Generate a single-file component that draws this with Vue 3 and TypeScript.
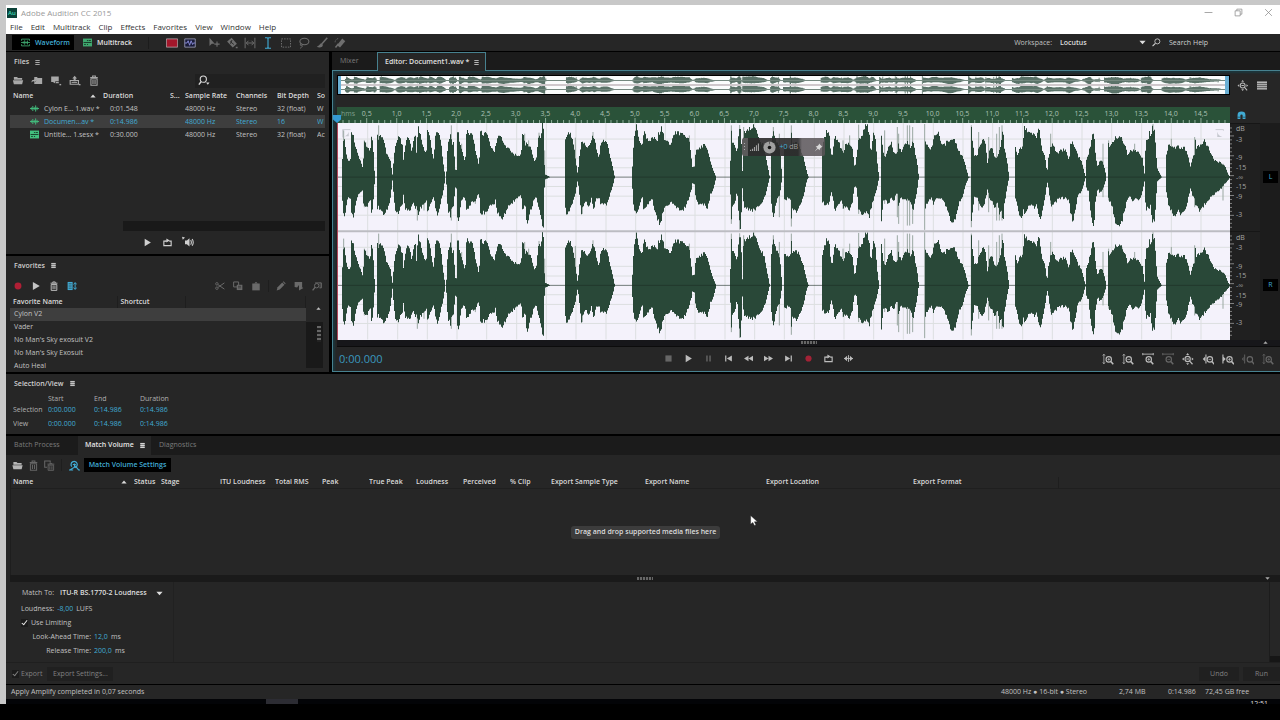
<script setup lang="ts">
import { h, ref } from 'vue'

/* ---------- icons ---------- */
const S = 'fill="none" stroke="currentColor"'
const mag = `<circle cx="9" cy="8.500" r="3.600" ${S} stroke-width="1.500"/><path d="M11.800 11.300l3.200 3.700" ${S} stroke-width="2"/>`
const plus = `<path d="M7.200 8.500h3.600M9 6.700v3.600" ${S} stroke-width="1"/>`
const minus = `<path d="M7.200 8.500h3.600" ${S} stroke-width="1"/>`
const vbar = `<path d="M2.500 2v12M1 3.500l1.500-2 1.500 2M1 12.500l1.500 2 1.500-2" ${S} stroke-width="1"/>`
const icons: Record<string, string> = {
  menu: `<path d="M3 3.500h10M3 8h10M3 12.500h10" ${S} stroke-width="1.800"/>`,
  grip: `<path d="M3 2h10v12H3z" fill="currentColor" opacity=".5"/><path d="M3 3.500h10M3 8h10M3 12.500h10" ${S} stroke-width="2"/>`,
  wave: `<path d="M0 8h16M2.500 6v4M5 3.500v9M7.500 5.500v5M10 2.500v11M12.500 5v6" ${S} stroke-width="1.600"/>`,
  waveBox: `<path d="M1 2h14M1 14h14M1 2v3M15 2v3M1 11v3M15 11v3M0 8h16M4 6v4M6.500 4v8M9 6v4M11.500 4.500v7" ${S} stroke-width="1.500"/>`,
  multi: `<path d="M0 1h16v14H0z" fill="currentColor"/><path d="M1 8h14M7 4.500h2M10 4.500h4M2 11.500h3M7 11.500h2" stroke="#10241a" stroke-width="1.400"/>`,
  spectral: `<path d="M.5 2.500h15v11H.5z" fill="#a3172b" stroke="#b9aeb2" stroke-width="1"/>`,
  pitch: `<path d="M1 2.500h14v11H1z" fill="#191b38" stroke="#a9abc9"/><path d="M1 8h3l1.500-3 2 6 2-6 2 5 1-2H15" ${S} stroke-width="1.200"/>`,
  move: `<path d="M2 1v11l3-3h4z" fill="currentColor"/><path d="M12 6v7M8.500 9.500h7" ${S} stroke-width="1.500"/>`,
  razor: `<path d="M1.500 6l6-5 7 8-5.500 5z" fill="currentColor"/><path d="M5.500 6l5 4M8 4l-2 5" stroke="#262626" stroke-width="1.200"/><path d="M13 13h2.500v2H13z" fill="currentColor"/>`,
  slip: `<path d="M1.500 1v14M14.500 1v14M3.500 8h9M6 5L3 8l3 3M10 5l3 3-3 3" ${S} stroke-width="1.300"/>`,
  ibeam: `<path d="M4 1h3l1 1 1-1h3M4 15h3l1-1 1 1h3M8 2v12" ${S} stroke-width="1.500"/>`,
  marquee: `<path d="M2 2.500h12v11H2z" ${S} stroke-width="1.300" stroke-dasharray="2 1.500"/>`,
  lasso: `<ellipse cx="8.500" cy="6" rx="6" ry="4.300" ${S} stroke-width="1.400"/><path d="M4 9c-2 1-1 3 1 2.500S5 14 3 15" ${S} stroke-width="1.300"/>`,
  brush: `<path d="M15 1L8 9" ${S} stroke-width="2"/><path d="M8 8.500c-3-.5-3 3.500-7 4.500 3 2 9 1 8-3z" fill="currentColor"/>`,
  heal: `<path d="M4 11l7-9 4 3.500L8 14z" fill="currentColor"/><path d="M2 14l4-5" ${S} stroke-width="2"/><path d="M1.500 7a5 5 0 015-5" ${S} stroke-width="1.200" stroke-dasharray="1.500 1"/>`,
  folder: `<path d="M2 3h4.500L8 4.500h6V7H2z" fill="currentColor"/><path d="M.5 7.500h15L14 13.500H2z" fill="currentColor"/>`,
  importF: `<path d="M4 3h4l1 1.500h6.500V13H4v-2L7 8.500 4 6z" fill="currentColor"/><path d="M0 11c0-3 1-4 4-4V5l3 3-3 3V9c-2 0-3 .5-4 2z" fill="currentColor"/>`,
  newFile: `<path d="M1 2h11v7H7v3.500L3.500 10H1z" fill="currentColor"/><path d="M8 10h4v2H8z" fill="currentColor"/><path d="M13 13h2.500v2H13z" fill="currentColor"/>`,
  insert: `<path d="M1 8h12v5.500H1z" ${S} stroke-width="1.700"/><path d="M3 10.700h8" ${S} stroke-width="1.500"/><path d="M6 9V5H4l3.500-4L11 5H9v4z" fill="currentColor"/><path d="M13.500 13H16v2h-2.500z" fill="currentColor"/>`,
  trash: `<path d="M2.500 3.500h11M6 3V1.500h4V3" ${S} stroke-width="1.500"/><path d="M3.500 5.500h9V15h-9z" ${S} stroke-width="1.500"/><path d="M6.500 7v6M9.500 7v6" ${S} stroke-width="1.500"/>`,
  search: `<circle cx="9.500" cy="6" r="4.500" ${S} stroke-width="1.500"/><path d="M6 9.500L1 14.500" ${S} stroke-width="2"/>`,
  searchDrop: `<circle cx="7" cy="6" r="4.500" ${S} stroke-width="1.600"/><path d="M4 9.500L.5 14" ${S} stroke-width="2"/><path d="M11 11h5l-2.500 3z" fill="currentColor"/>`,
  play: `<path d="M3 1.500l11 6.500L3 14.500z" fill="currentColor"/>`,
  stop: `<path d="M2.500 2.500h11v11h-11z" fill="currentColor"/>`,
  pause: `<path d="M4 2.500h2.500v11H4zM9.500 2.500H12v11H9.500z" fill="currentColor"/>`,
  prev: `<path d="M2 2.500h2.200v11H2zM14 2.500v11L5 8z" fill="currentColor"/>`,
  next: `<path d="M11.800 2.500H14v11h-2.200zM2 2.500v11L11 8z" fill="currentColor"/>`,
  rew: `<path d="M8 3v10L0 8zM16 3v10L8 8z" fill="currentColor"/>`,
  ffwd: `<path d="M0 3v10l8-5zM8 3v10l8-5z" fill="currentColor"/>`,
  rec: `<circle cx="8" cy="8" r="5.500" fill="currentColor"/>`,
  loop: `<path d="M5 5.500H1.500v8h13v-8H11" ${S} stroke-width="2"/><path d="M6 1l6 3.500L6 8z" fill="currentColor"/><path d="M4 5.500h3" ${S} stroke-width="2"/>`,
  skip: `<path d="M5.500 3L0 8l5.500 5zM10.500 3L16 8l-5.500 5z" fill="currentColor"/><path d="M0 8h16M8 2v12" ${S} stroke-width="1.600"/>`,
  speaker: `<path d="M4 6h2.500L10 3v11L6.500 11H4z" fill="currentColor"/><path d="M11.500 5.500q2 3 0 6M13.500 4q3 4.500 0 9" ${S} stroke-width="1.400"/><path d="M0 1l4 1-3 3z" fill="currentColor"/>`,
  macro: `<path d="M1 1.500h8v13H1z" fill="currentColor"/><path d="M2.500 4.500h5M2.500 8h5M2.500 11.500h5" stroke="#262626"/><path d="M13 3v10M10.500 5.500L13 2.500l2.500 3M10.500 10.500l2.500 3 2.500-3" ${S} stroke-width="1.500"/>`,
  cut: `<path d="M15 3L5 10M15 13L5 6" ${S} stroke-width="1.600"/><circle cx="3" cy="4.500" r="2" ${S} stroke-width="1.400"/><circle cx="3" cy="11.500" r="2" ${S} stroke-width="1.400"/>`,
  copy: `<path d="M1 1.500h8v8H1z" ${S} stroke-width="1.600"/><path d="M6 6h9v8.500H6z" fill="currentColor"/><path d="M8 8.500h5M8 11h5" stroke="#262626"/>`,
  copyTrash: `<path d="M9 4V1.500H1v9h3.500" ${S} stroke-width="1.500"/><path d="M5 6h10M8 5h4M6 7.500h8V15H6zM8.500 9v5M11.500 9v5" ${S} stroke-width="1.300"/>`,
  paste: `<path d="M2 4h12v11H2z" fill="currentColor"/><path d="M5 4l3-3 3 3z" fill="currentColor"/>`,
  pencil: `<path d="M1 15l1.500-5L10 2.500 13.500 6 6 13.500z" fill="currentColor"/><path d="M11 1.500l1-1 3.500 3.500-1 1z" fill="currentColor"/>`,
  runFav: `<path d="M1 1.500h12v8H8v-3l-3 4-4-1z" fill="currentColor"/><path d="M8 7l7 4-7 4z" fill="currentColor"/>`,
  find: `<path d="M5 3h10v8h-3" ${S} stroke-width="1.500"/><circle cx="7.500" cy="7.500" r="3.500" ${S} stroke-width="1.600"/><path d="M5 10l-4 5" ${S} stroke-width="2"/><path d="M13 2v9" ${S}/>`,
  scan: `<path d="M4 9.500A4.500 4.500 0 118.500 11" ${S} stroke-width="1.800"/><path d="M8 5v5.500L1 14.500h5M9 8.500l5 6h2M5.500 6.500H10" ${S} stroke-width="1.700"/>`,
  zInV: vbar + mag + plus,
  zOutV: vbar + mag + minus,
  zInH: `<path d="M1 1.500h14M1 0v3M15 0v3" ${S} stroke-width="1.200"/>` + mag + plus,
  zOutH: `<path d="M1 1.500h14M1 0v3M15 0v3" ${S} stroke-width="1.200"/>` + mag + minus,
  zFull: `<circle cx="7.500" cy="8" r="3.500" ${S} stroke-width="1.500"/><path d="M10 10.500l4 4.500M5.700 8h3.600" ${S} stroke-width="1.600"/><path d="M7.500 0l2 2.500h-4zM7.500 16l2-2.500h-4zM0 8l2.500-2v4zM15.500 8L13 6v4z" fill="currentColor"/>`,
  zLeft: `<path d="M1 8l3-3v6zM4.500 2H6v12H4.500z" fill="currentColor"/>` + `<g transform="translate(1.500 0)">${mag}${minus}</g>`,
  zRight: `<path d="M5 8L2 5v6zM.5 2H2v12H.5z" fill="currentColor"/>` + `<g transform="translate(1 0)">${mag}${plus}</g>`,
  zSel: `<path d="M0 8l2-3v6zM3 2h1.200v12H3z" fill="currentColor"/>` + `<g transform="translate(1.500 0)">${mag}</g>`,
  list: `<path d="M0 1.500h16v13H0z" fill="currentColor"/><path d="M0 5h16M0 8.200h16M0 11.400h16" stroke="#262626" stroke-width="1"/>`,
  magnet: `<path d="M1 14V7a7 6 0 0114 0v7h-5V8a2 2 0 00-4 0v6z" fill="currentColor"/><path d="M1 11h5M10 11h5" stroke="#1d3a44" stroke-width="1.200"/>`,
  bars: `<path d="M0 14V12h2v2zM3.500 14v-4h2v4zM7 14V7h2v7zM10.500 14V4h2v10zM14 14V1h2v13z" fill="currentColor"/>`,
  knob: `<circle cx="8" cy="8" r="7.500" fill="currentColor"/><circle cx="8" cy="8" r="2.200" fill="#151515"/><path d="M8 0v4" stroke="#555"/>`,
  pin: `<path d="M9 1l6 6-2 .5-2.500 2.500-.5 3-3-3L1 15l5-6-3-3 3-.5L8.500 3z" fill="currentColor"/>`,
  up: `<path d="M8 4l7 8H1z" fill="currentColor"/>`,
  down: `<path d="M8 12l7-8H1z" fill="currentColor"/>`,
  min: `<path d="M1 8h14" ${S} stroke-width="1.300"/>`,
  max: `<path d="M2 5h9v9H2zM5 5V2h9v9h-3" ${S} stroke-width="1.300"/>`,
  close: `<path d="M2 2l12 12M14 2L2 14" ${S} stroke-width="1.300"/>`,
  fadeIn: `<path d="M1 15V1h14" ${S} stroke-width="1.500"/><path d="M4 13q6-1 8-8v8z" fill="currentColor"/>`,
  fadeOut: `<path d="M1 1h14v2" ${S} stroke-width="1.500"/><path d="M4 5v9h9q-7-1-9-9z" fill="currentColor"/>`,
  cursor: `<path d="M1 0v14l3.500-3 2.500 5 2.500-1-2.500-5H12z" fill="#fff" stroke="#111" stroke-width=".6"/>`,
}
const Icon = (p: { name: string }) =>
  h('svg', { viewBox: '0 0 16 16', class: 'icon', 'aria-hidden': 'true', innerHTML: icons[p.name] })
Icon.props = ['name']

/* ---------- content ---------- */
const menus = ['File', 'Edit', 'Multitrack', 'Clip', 'Effects', 'Favorites', 'View', 'Window', 'Help']
const tools = [
  ['move', 'Move'], ['razor', 'Razor'], ['slip', 'Slip'], ['ibeam', 'Time Selection'],
  ['marquee', 'Marquee'], ['lasso', 'Lasso'], ['brush', 'Paintbrush'], ['heal', 'Spot Healing'],
]
const files = [
  { icon: 'wave', name: 'Cylon E... 1.wav *', dur: '0:01.548', bits: '32 (float)', src: 'W' },
  { icon: 'wave', name: 'Documen...av *', dur: '0:14.986', bits: '16', src: 'W', sel: true },
  { icon: 'multi', name: 'Untitle... 1.sesx *', dur: '0:30.000', bits: '32 (float)', src: 'Ac' },
]
const favorites = ['Cylon V2', 'Vader', "No Man's Sky exosuit V2", "No Man's Sky Exosuit", 'Auto Heal']
const selection = [
  { label: 'Selection', values: ['0:00.000', '0:14.986', '0:14.986'] },
  { label: 'View', values: ['0:00.000', '0:14.986', '0:14.986'] },
]
const transport = [
  ['stop', 'Stop', 'dim'], ['play', 'Play', ''], ['pause', 'Pause', 'dim'], ['prev', 'Previous', ''], ['rew', 'Rewind', ''],
  ['ffwd', 'Fast Forward', ''], ['next', 'Next', ''], ['rec', 'Record', 'red'], ['loop', 'Loop', ''], ['skip', 'Skip Selection', ''],
]
const zooms = [
  ['zInV', ''], ['zOutV', ''], ['zInH', ''], ['zOutH', 'dim'], ['zFull', ''],
  ['zLeft', ''], ['zRight', ''], ['zSel', 'dim'], ['zInV', 'dim'],
]
const matchCols = [
  ['Name', 'c-name'], ['Status', 'c-status'], ['Stage', 'c-stage'], ['ITU Loudness', 'c-itu'], ['Total RMS', 'c-num'],
  ['Peak', 'c-num'], ['True Peak', 'c-num'], ['Loudness', 'c-num'], ['Perceived', 'c-num'], ['% Clip', 'c-clip'],
  ['Export Sample Type', 'c-type'], ['Export Name', 'c-ename'], ['Export Location', 'c-loc'], ['Export Format', 'c-fmt'], ['', ''],
]
const workspace = ref('Locutus')
const matchTo = ref('ITU-R BS.1770-2 Loudness')
const limiting = ref(true)
const exportOn = ref(true)

/* ---------- waveform ---------- */
const W = 2676
const CH = 324
const MID = 162
/* peaks: x, level above zero, level below zero */
type Peak = [number, number, number]
const sections: { origin: number; peaks: Peak[] }[] = [
  { origin: -24, peaks: [
    [24, 0, 0], [34, 0, 0], [36, 57, 73], [40, 127, 118], [44, 97, 123], [48, 72, 83], [54, 47, 58], [60, 52, 68], [62, 132, 108], [68, 127, 123],
    [76, 92, 83], [84, 67, 53], [96, 32, 43], [98, 37, 83], [102, 112, 88], [108, 97, 93], [118, 77, 73], [122, 90, 73], [124, 155, 148], [126, 117, 93],
    [130, 57, 63], [133, 0, 0], [138, 0, 0], [139, 152, 143], [142, 107, 83], [148, 135, 103], [160, 107, 111], [170, 67, 103], [180, 47, 63], [187, 2, 1],
    [190, 62, 63], [196, 97, 103], [202, 117, 113], [208, 117, 98], [216, 97, 83], [219, 52, 53], [224, 97, 93], [234, 122, 103], [244, 77, 93], [248, 107, 73],
    [256, 127, 98], [259, 50, 80], [262, 157, 113], [268, 137, 98], [278, 87, 83], [288, 77, 73], [291, 147, 103], [298, 127, 88], [308, 57, 63], [310, 52, 53],
    [314, 122, 93], [322, 147, 118], [330, 117, 83], [340, 27, 33], [345, 0, 0], [348, 17, 23], [352, 97, 103], [357, 110, 100], [358, 132, 153], [361, 132, 100], [364, 97, 93],
    [370, 107, 83], [374, 22, 33], [379, 22, 33], [380, 107, 83], [382, 157, 153], [386, 117, 123], [392, 87, 73], [404, 42, 58], [408, 137, 103], [416, 132, 93],
    [426, 127, 73], [436, 77, 73], [446, 32, 43], [450, 137, 113], [460, 132, 108], [470, 127, 103], [480, 97, 83], [492, 77, 78], [494, 87, 63], [500, 112, 103],
    [506, 127, 113], [518, 107, 123], [530, 87, 93], [545, 77, 78], [560, 62, 63], [572, 72, 53], [577, 137, 103], [584, 97, 83], [590, 102, 143], [600, 92, 103],
    [612, 47, 63], [618, 57, 63], [624, 117, 93], [632, 122, 118], [636, 157, 158], [639, 147, 153], [642, 37, 33], [645, 8, 6], [655, 2, 2], [658, 0, 0],
    [702, 0, 0], [703, 107, 83], [708, 127, 113], [714, 135, 103], [724, 122, 88], [734, 67, 53], [742, 7, 8], [746, 52, 43], [752, 107, 110], [760, 107, 83],
    [768, 87, 73], [776, 97, 93], [784, 117, 63], [790, 122, 103], [796, 97, 68], [806, 57, 63], [810, 102, 78], [820, 112, 78], [830, 107, 83], [838, 67, 53],
    [848, 27, 23], [853, 0, 0], [905, 0, 0], [907, 67, 73], [912, 127, 103], [918, 152, 113], [926, 117, 93], [935, 87, 53], [940, 137, 103], [950, 112, 83],
  ] },
  { origin: 906, peaks: [
    [0, 97, 63], [5, 67, 53], [8, 147, 103], [16, 117, 98], [26, 107, 73], [36, 122, 68], [42, 117, 103], [50, 107, 123], [54, 132, 133], [58, 132, 148],
    [64, 157, 128], [68, 127, 103], [76, 107, 83], [80, 117, 93], [90, 97, 73], [98, 132, 83], [110, 135, 93], [125, 132, 101], [135, 117, 93], [145, 122, 63],
    [152, 67, 43], [156, 32, 18], [162, 32, 23], [166, 77, 63], [174, 87, 83], [184, 92, 83], [192, 99, 83], [202, 77, 93], [210, 47, 53], [220, 17, 33],
    [227, 0, 0], [267, 0, 0], [268, 37, 33], [271, 60, 60], [272, 157, 148], [276, 107, 93], [284, 87, 73], [290, 77, 43], [294, 127, 103], [299, 157, 158],
    [302, 127, 133], [306, 17, 33], [308, 107, 73], [312, 132, 88], [320, 142, 93], [330, 147, 98], [340, 157, 101], [350, 137, 93], [360, 107, 83], [372, 87, 63],
    [380, 42, 33], [388, 0, 0], [392, 0, 0], [393, 97, 83], [398, 137, 128], [404, 127, 93], [412, 97, 63], [418, 87, 53], [425, 0, 0], [430, 0, 0],
    [432, 97, 68], [444, 87, 63], [452, 90, 70], [453, 137, 133], [456, 97, 93], [468, 107, 103], [480, 87, 83], [490, 57, 53], [500, 12, 8], [505, 0, 0],
    [544, 0, 0], [546, 87, 73], [552, 122, 83], [558, 135, 83], [566, 127, 78], [574, 57, 43], [580, 97, 83], [584, 127, 103], [592, 112, 83], [602, 87, 73],
    [610, 77, 93], [618, 107, 88], [628, 97, 103], [636, 87, 73], [643, 27, 23], [648, 57, 33], [655, 117, 103], [664, 122, 113], [672, 152, 103], [680, 157, 108],
    [686, 137, 123], [692, 67, 93], [698, 137, 73], [704, 127, 53], [710, 47, 33], [716, 0, 0], [720, 0, 0], [722, 137, 143], [728, 77, 73], [736, 57, 73],
    [744, 97, 83], [752, 107, 63], [760, 77, 73], [770, 67, 43], [774, 97, 83], [782, 77, 63], [792, 97, 63], [800, 107, 68], [810, 87, 73], [818, 117, 103],
    [824, 67, 68], [830, 47, 43], [835, 0, 0], [852, 0, 0], [854, 107, 100], [856, 107, 83], [864, 87, 73], [872, 87, 63], [880, 117, 83], [888, 132, 63],
    [894, 132, 68], [904, 97, 63], [912, 97, 78], [920, 107, 93],
  ] },
  { origin: 1836, peaks: [
    [0, 112, 133], [8, 115, 143], [16, 107, 123], [26, 77, 78], [36, 62, 58], [46, 32, 23], [54, 2, 3], [60, 0, 0], [62, 157, 133], [66, 107, 113],
    [72, 67, 63], [80, 67, 58], [88, 97, 83], [96, 112, 93], [104, 107, 73], [112, 32, 33], [116, 82, 63], [126, 87, 73], [134, 57, 93], [140, 57, 73],
    [148, 87, 113], [152, 100, 103], [158, 152, 133], [162, 87, 83], [170, 47, 33], [176, 0, 0], [194, 0, 0], [195, 87, 63], [200, 67, 83], [210, 87, 123],
    [217, 92, 120], [220, 132, 93], [222, 147, 113], [232, 135, 93], [242, 135, 83], [252, 127, 93], [258, 117, 83], [265, 152, 113], [272, 107, 123], [275, 77, 103],
    [284, 62, 63], [290, 12, 13], [294, 57, 33], [302, 97, 88], [310, 97, 83], [318, 72, 73], [326, 77, 63], [336, 82, 63], [346, 82, 63], [356, 47, 73],
    [360, 102, 103], [367, 112, 133], [374, 87, 103], [382, 67, 53], [394, 47, 43], [402, 12, 13], [406, 0, 0], [408, 52, 33], [414, 67, 43], [420, 97, 103],
    [426, 132, 143], [431, 132, 143], [434, 77, 83], [442, 27, 33], [448, 52, 48], [454, 52, 43], [462, 27, 23], [468, 0, 0], [471, 0, 0], [472, 117, 63],
    [478, 87, 73], [486, 107, 93], [494, 119, 133], [504, 122, 143], [514, 117, 138], [524, 97, 93], [532, 62, 63], [538, 77, 58], [546, 82, 73], [556, 77, 63],
    [566, 77, 73], [576, 57, 43], [582, 12, 13], [586, 107, 103], [592, 107, 83], [596, 137, 103], [600, 117, 83], [606, 157, 133], [612, 137, 133], [616, 87, 83],
    [620, 27, 13], [634, 0, 0], [647, 0, 0], [648, 67, 43], [654, 97, 83], [664, 92, 103], [672, 87, 123], [682, 92, 103], [692, 87, 113], [704, 87, 103],
    [712, 67, 73], [720, 32, 33], [726, 57, 53], [732, 70, 63], [733, 137, 93], [738, 87, 83], [748, 97, 108], [756, 97, 93], [762, 112, 83], [770, 97, 78],
    [780, 77, 63], [790, 52, 53], [802, 47, 43], [814, 42, 33], [824, 32, 18], [834, 7, 8], [839, 0, 0],
  ] },
]
const peaks: Peak[] = sections.flatMap(s => s.peaks.map(([x, u, d]): Peak => [x + s.origin, u, d]))

/* repeatable ripple so that the outline looks like sampled audio */
const ripple = (n: number) => {
  const v = Math.sin(n * 12.9898) * 43758.5453
  return 0.93 + (v - Math.floor(v)) * 0.12
}
const level = (x: number, side: 1 | 2) => {
  let i = peaks.findIndex(p => p[0] > x)
  if (i < 1) i = i === 0 ? 1 : peaks.length - 1
  const a = peaks[i - 1]
  const b = peaks[i]
  const t = Math.min(1, Math.max(0, (x - a[0]) / (b[0] - a[0])))
  return a[side] + (b[side] - a[side]) * t
}
const outline = (() => {
  const top: string[] = []
  const bottom: string[] = []
  for (let x = 0; x <= W; x += 3) {
    const u = MID - level(x, 1) * ripple(x)
    const d = MID + level(x, 2) * ripple(x + 7)
    top.push(`L${x} ${u.toFixed(0)}H${x + 3}`)
    bottom.unshift(`L${x + 3} ${d.toFixed(0)}H${x}`)
  }
  return `M0 ${MID}${top.join('')}${bottom.join('')}Z`
})()

/* faint transients behind the main body */
const transients = [
  [17, 140, 80], [43, 120, 60], [79, 110, 90], [83, 105, 80], [122, 155, 80], [238, 120, 130], [258, 60, 100], [340, 155, 130], [371, 100, 60], [412, 70, 80], [433, 60, 90],
  [560, 130, 80], [572, 110, 90], [603, 133, 90], [620, 80, 30], [712, 118, 50], [733, 80, 110], [765, 135, 80], [918, 120, 90], [1023, 110, 70], [1054, 125, 60],
  [1180, 155, 140], [1205, 156, 157], [1217, 150, 60], [1306, 150, 60], [1324, 130, 120], [1360, 155, 148], [1515, 110, 95], [1535, 125, 80], [1562, 157, 110], [1640, 140, 80], [1678, 150, 120],
  [1682, 130, 140], [1708, 155, 145], [1715, 155, 145], [1724, 150, 140], [1760, 159, 158], [1900, 155, 150], [1922, 135, 100], [1952, 120, 105], [1976, 130, 130],
  [1984, 150, 130], [1992, 155, 130], [2138, 130, 80], [2295, 100, 60], [2312, 110, 70], [2352, 115, 100], [2390, 100, 60], [2445, 159, 130], [2500, 115, 90], [2570, 120, 90], [2655, 40, 70],
].map(([x, u, d]) => `M${x} ${MID - u}V${MID + d}`).join('')

const gridX = Array.from({ length: 29 }, (_, i) => ((i + 1) * 0.5 * W) / 14.986)
const levelsY = [48, 105, 134, 190, 219, 276]
const gridPath =
  gridX.map(x => `M${x.toFixed(0)} 0V${CH * 2}`).join('') +
  [0, CH].flatMap(o => levelsY.map(y => `M0 ${y + o}H${W}`)).join('')
const ruler = gridX.map((_, i) => ((i + 1) / 2).toFixed(1).replace('.', ','))
const rulerTicks = Array.from({ length: 149 }, (_, i) => {
  const x = (((i + 1) * 0.1 * W) / 14.986).toFixed(0)
  return `M${x} ${(i + 1) % 5 === 0 ? 11 : 13}V16`
}).join('')
const dbMarks = [
  ['dB', 5], ['-3', 15], ['-9', 32], ['-15', 41], ['-∞', 50], ['-15', 59], ['-9', 68], ['-3', 85],
] as const
const dbTicks = Array.from({ length: 26 }, (_, i) => `M0 ${i * 4 + 4}H${i % 5 === 2 ? 4 : 2}`).join('')
</script>

<template>
  <div class="desktop">
    <div class="window">
      <header class="titlebar">
        <span class="logo">Au</span>
        <h1>Adobe Audition CC 2015</h1>
        <div class="winbtns">
          <button v-for="b in ['min', 'max', 'close']" :key="b" :aria-label="b"><Icon :name="b" /></button>
        </div>
      </header>
      <nav class="menubar">
        <button v-for="m in menus" :key="m">{{ m }}</button>
      </nav>

      <div class="toolbar">
        <button class="mode active"><Icon name="waveBox" class="green" />Waveform</button>
        <button class="mode"><Icon name="multi" class="green" />Multitrack</button>
        <div class="display">
          <button aria-label="Spectral display"><Icon name="spectral" class="big" /></button>
          <button aria-label="Pitch display"><Icon name="pitch" class="big violet" /></button>
        </div>
        <div class="tools">
          <button v-for="t in tools" :key="t[0]" :aria-label="t[1]" :class="{ on: t[0] === 'ibeam' }"><Icon :name="t[0]" class="big" /></button>
        </div>
        <div class="workspace">
          <label for="ws">Workspace:</label>
          <span class="drop">
            <select id="ws" v-model="workspace"><option>Locutus</option></select>
            <Icon name="down" />
          </span>
          <label class="help"><Icon name="search" /><input type="text" placeholder="Search Help" aria-label="Search Help" /></label>
        </div>
      </div>

      <main class="upper">
        <div class="side">
          <section class="panel files">
            <h2>Files <Icon name="menu" /></h2>
            <div class="filebar">
              <button v-for="n in ['folder', 'importF', 'newFile', 'insert', 'trash']" :key="n" :aria-label="n"><Icon :name="n" /></button>
              <label class="filter"><Icon name="searchDrop" /><input type="text" aria-label="Filter files" /></label>
            </div>
            <div class="clip">
              <table class="filetable">
                <thead>
                  <tr>
                    <th class="f-name"><span class="sorted">Name<Icon name="up" /></span></th>
                    <th class="f-dur">Duration</th>
                    <th class="f-st">S...</th>
                    <th class="f-rate">Sample Rate</th>
                    <th class="f-ch">Channels</th>
                    <th class="f-bit">Bit Depth</th>
                    <th>So</th>
                  </tr>
                </thead>
                <tbody>
                  <tr v-for="f in files" :key="f.name" :class="{ sel: f.sel }">
                    <td><span class="fname"><Icon :name="f.icon" class="lime" />{{ f.name }}</span></td>
                    <td class="indent">{{ f.dur }}</td>
                    <td></td>
                    <td>48000 Hz</td>
                    <td>Stereo</td>
                    <td>{{ f.bits }}</td>
                    <td>{{ f.src }}</td>
                  </tr>
                </tbody>
              </table>
            </div>
            <div class="hscroll"><i></i></div>
            <div class="preview">
              <button aria-label="Play"><Icon name="play" /></button>
              <button aria-label="Loop"><Icon name="loop" /></button>
              <button aria-label="Auto-play"><Icon name="speaker" class="big" /></button>
            </div>
          </section>

          <section class="panel favs">
            <h2>Favorites <Icon name="grip" /></h2>
            <div class="favbar">
              <button aria-label="Record"><Icon name="rec" class="red" /></button>
              <button aria-label="Run"><Icon name="play" /></button>
              <button aria-label="Delete"><Icon name="trash" /></button>
              <button aria-label="Macro"><Icon name="macro" class="cyan" /></button>
              <div class="favedit">
                <button v-for="n in ['cut', 'copy', 'paste']" :key="n" :aria-label="n"><Icon :name="n" /></button>
                <i class="sep"></i>
                <button v-for="n in ['pencil', 'runFav', 'find']" :key="n" :aria-label="n"><Icon :name="n" /></button>
              </div>
            </div>
            <div class="favlist">
              <table>
                <thead><tr><th class="v-name">Favorite Name</th><th class="v-key">Shortcut</th><th></th></tr></thead>
                <tbody>
                  <tr v-for="(f, i) in favorites" :key="f" :class="{ sel: i === 0 }"><td>{{ f }}</td><td></td><td></td></tr>
                </tbody>
              </table>
              <div class="vscroll"><Icon name="up" /><i></i></div>
            </div>
          </section>
        </div>

        <section class="editor">
          <div class="tabs">
            <button class="tab">Mixer</button>
            <button class="tab current">Editor: Document1.wav * <Icon name="menu" /></button>
          </div>
          <div class="stage">
            <div class="overviewrow">
              <div class="overview">
                <svg :viewBox="`0 0 ${W} ${CH * 2}`" preserveAspectRatio="none">
                  <g v-for="c in [0, 1]" :key="c" :transform="`translate(0 ${c * CH})`">
                    <path class="hair" :d="transients" />
                    <path :d="outline" />
                    <path class="hair" :d="`M0 ${MID}H${W}`" />
                  </g>
                  <path class="faint" :d="`M0 ${CH}H${W}`" />
                </svg>
              </div>
              <button aria-label="Zoom to fit"><Icon name="zFull" class="big" /></button>
              <button aria-label="Display list"><Icon name="list" /></button>
            </div>
            <div class="rulerrow">
              <div class="ruler">
                <svg class="ticks" :viewBox="`0 0 ${W} 16`" preserveAspectRatio="none"><path :d="rulerTicks" /></svg>
                <span class="unit">hms</span>
                <div class="labels"><span v-for="r in ruler" :key="r">{{ r }}</span></div>
                <i class="playhead"></i>
              </div>
              <button aria-label="Snapping"><Icon name="magnet" class="cyan" /></button>
            </div>
            <div class="waverow">
              <div class="wave">
                <svg class="plot" :viewBox="`0 0 ${W} ${CH * 2}`" preserveAspectRatio="none">
                  <path class="grid" :d="gridPath" />
                  <g v-for="c in [0, 1]" :key="c" :transform="`translate(0 ${c * CH})`">
                    <path class="transient" :d="transients" />
                    <path class="body" :d="outline" />
                    <path class="zero" :d="`M0 ${MID}H${W}`" />
                  </g>
                  <path class="split" :d="`M0 ${CH}H${W}`" />
                </svg>
                <Icon name="fadeIn" class="fade left" />
                <Icon name="fadeOut" class="fade right" />
                <div class="hud">
                  <i class="dots"></i><Icon name="bars" /><Icon name="knob" class="knob" />
                  <span><b>+0</b> dB</span><Icon name="pin" class="pin" />
                </div>
              </div>
              <div class="scales">
                <div v-for="c in ['L', 'R']" :key="c" class="scale">
                  <svg class="dbticks" viewBox="0 0 4 108" preserveAspectRatio="none"><path :d="dbTicks" /></svg>
                  <span v-for="(m, i) in dbMarks" :key="i" :style="{ top: m[1] + '%' }">{{ m[0] }}</span>
                </div>
              </div>
              <div class="channels">
                <button>L</button>
                <button>R</button>
              </div>
            </div>
            <div class="grip"><i></i><Icon name="up" /></div>
            <div class="transport">
              <output>0:00.000</output>
              <div class="keys">
                <button v-for="t in transport" :key="t[0]" :aria-label="t[1]" :class="t[2]"><Icon :name="t[0]" /></button>
              </div>
              <div class="keys zoomkeys">
                <button v-for="(z, i) in zooms" :key="i" :class="z[1]" :aria-label="z[0]"><Icon :name="z[0]" class="big" /></button>
              </div>
            </div>
          </div>
        </section>
      </main>

      <section class="panel selview">
        <h2>Selection/View <Icon name="grip" /></h2>
        <table>
          <thead><tr><th></th><th>Start</th><th>End</th><th>Duration</th></tr></thead>
          <tbody>
            <tr v-for="s in selection" :key="s.label">
              <th>{{ s.label }}</th>
              <td v-for="(v, i) in s.values" :key="i"><button>{{ v }}</button></td>
            </tr>
          </tbody>
        </table>
      </section>

      <section class="match">
        <div class="mtabs">
          <button>Batch Process</button>
          <button class="current">Match Volume <Icon name="grip" /></button>
          <button>Diagnostics</button>
        </div>
        <div class="mbar">
          <button aria-label="Open"><Icon name="folder" class="lit" /></button>
          <button aria-label="Remove"><Icon name="trash" /></button>
          <button aria-label="Remove all"><Icon name="copyTrash" /></button>
          <i class="sep"></i>
          <button aria-label="Scan"><Icon name="scan" class="cyan" /></button>
          <button class="settings">Match Volume Settings</button>
        </div>
        <div class="mbody">
          <table>
            <thead>
              <tr>
                <th v-for="c in matchCols" :key="c[0]" :class="c[1]">
                  <span v-if="c[0] === 'Name'" class="sorted">Name<Icon name="up" /></span>
                  <template v-else>{{ c[0] }}</template>
                </th>
              </tr>
            </thead>
          </table>
          <div class="dropzone"><p>Drag and drop supported media files here</p></div>
        </div>
        <div class="grip second"><i></i><Icon name="down" /></div>
        <div class="params">
          <form class="group" @submit.prevent>
            <div class="legend">
              <label for="mt">Match To:</label>
              <span class="drop"><select id="mt" v-model="matchTo"><option>ITU-R BS.1770-2 Loudness</option></select><Icon name="down" /></span>
            </div>
            <label class="line">Loudness: <input class="hot" type="text" value="-8,00" /> LUFS</label>
            <label class="line"><input v-model="limiting" type="checkbox" /> Use Limiting</label>
            <label class="line sub"><span>Look-Ahead Time:</span> <input class="hot short" type="text" value="12,0" /> ms</label>
            <label class="line sub"><span>Release Time:</span> <input class="hot wide" type="text" value="200,0" /> ms</label>
          </form>
          <div class="rail"></div>
        </div>
        <div class="actions">
          <label><input v-model="exportOn" type="checkbox" disabled /> Export</label>
          <button class="exp">Export Settings...</button>
          <button class="undo">Undo</button>
          <button class="run">Run</button>
        </div>
      </section>

      <footer class="status">
        <span class="msg">Apply Amplify completed in 0,07 seconds</span>
        <span class="fmt">48000 Hz ● 16-bit ● Stereo</span>
        <span class="size">2,74 MB</span>
        <span class="len">0:14.986</span>
        <span class="free">72,45 GB free</span>
      </footer>
      <div class="taskbar"><i></i><time>12:51</time></div>
      <Icon name="cursor" class="cursor" />
    </div>
  </div>
</template>

<style>
body {
  margin: 0;
  background: #000;
}
</style>

<style scoped>
* {
  box-sizing: border-box;
}
.desktop {
  min-height: 100vh;
  display: flex;
  flex-direction: column;
  padding-bottom: 16px;
  background: #000;
  color: #c2c2c2;
  font: 7px/10px "Open Sans", "Noto Sans", sans-serif;
}
.window {
  position: relative;
  flex: 1;
  display: flex;
  flex-direction: column;
  padding: 5px 0 0 6px;
  background: #c8c8c8;
}
button,
select,
input {
  font: inherit;
  color: inherit;
  background: none;
  border: 0;
  padding: 0;
  margin: 0;
  border-radius: 0;
}
button {
  white-space: nowrap;
}
h1,
h2,
p {
  margin: 0;
}
table {
  border-collapse: collapse;
  table-layout: fixed;
  width: 100%;
}
th,
td {
  padding: 0;
  text-align: left;
  font-weight: 400;
  white-space: nowrap;
  overflow: hidden;
}
.icon {
  width: 9px;
  height: 9px;
  flex: none;
  display: inline-block;
  vertical-align: middle;
}
.icon.big {
  width: 12px;
  height: 12px;
}
.green {
  color: #3fa86f;
}
.lime {
  color: #43c07f;
}
.red {
  color: #b01f35;
}
.cyan {
  color: #41abd4;
}
.violet {
  color: #8f92e0;
}
.dim {
  color: #6e6e6e;
}

/* title and menus */
.titlebar {
  display: flex;
  align-items: center;
  height: 15px;
  padding: 0 7px 0 1px;
  background: #fff;
}
.logo {
  width: 10px;
  height: 10px;
  background: #0b4138;
  color: #3fdcb6;
  font-size: 6px;
  font-weight: 600;
  line-height: 10px;
  text-align: center;
}
.titlebar h1 {
  margin-left: 4px;
  font-size: 8px;
  font-weight: 400;
  color: #999;
}
.winbtns {
  display: flex;
  gap: 21px;
  margin-left: auto;
  color: #888;
}
.winbtns button {
  display: flex;
}
.menubar {
  display: flex;
  gap: 8px;
  height: 14px;
  padding-left: 4px;
  background: #fff;
  color: #333;
  font-size: 8px;
}

/* main toolbar */
.toolbar {
  display: flex;
  align-items: center;
  height: 18px;
  padding: 0 70px 0 6px;
  background: #262626;
  border-bottom: 1px solid #000;
}
.toolbar button {
  display: flex;
  align-items: center;
  justify-content: center;
}
.toolbar .mode {
  justify-content: flex-start;
  gap: 4px;
  width: 62px;
  height: 15px;
  padding-left: 8px;
  color: #e4e4e4;
  font-weight: 600;
}
.mode .icon {
  width: 11px;
}
.toolbar .mode.active {
  background: #000;
  color: #41abd4;
}
.display,
.tools {
  display: flex;
}
.display {
  margin-left: 12px;
  padding-left: 14px;
  border-left: 1px solid #1c1c1c;
}
.tools {
  margin-left: 6px;
  color: #6e6e6e;
}
.display button,
.tools button {
  width: 18px;
}
.tools .on {
  color: #41abd4;
}
.workspace {
  display: flex;
  align-items: center;
  margin-left: auto;
}
.drop {
  display: flex;
  align-items: center;
  color: #dedede;
  font-weight: 600;
}
.drop select {
  appearance: none;
  outline: 0;
}
.drop .icon {
  width: 7px;
  height: 7px;
}
.workspace .drop {
  margin-left: 8px;
}
.workspace select {
  width: 79px;
}
.help {
  display: flex;
  align-items: center;
  gap: 8px;
  margin-left: 6px;
  color: #d0d0d0;
}
.help input {
  width: 41px;
}
.help input::placeholder {
  color: #d0d0d0;
  opacity: 1;
}

/* upper area */
.upper {
  flex: 1 0 auto;
  display: grid;
  grid-template-columns: 323px 1fr;
  column-gap: 3px;
  background: #000;
  border-bottom: 2px solid #000;
}
.side {
  display: flex;
  flex-direction: column;
  gap: 2px;
}
.panel {
  background: #262626;
}
.panel h2 {
  display: flex;
  align-items: center;
  gap: 5px;
  height: 20px;
  padding-left: 8px;
  font-size: 7px;
  font-weight: 600;
  color: #cfcfcf;
}
.panel h2 .icon {
  width: 7px;
  height: 7px;
}
.files {
  flex: 1;
  display: flex;
  flex-direction: column;
}
.filebar {
  display: flex;
  align-items: center;
  height: 17px;
  padding-left: 2px;
  color: #a8a8a8;
}
.filebar button {
  width: 19px;
}
.filebar .icon {
  width: 12px;
  height: 11px;
}
.filter {
  display: flex;
  align-items: center;
  flex: 1;
  height: 14px;
  margin: 0 4px 0 92px;
  padding-left: 3px;
  background: #202020;
  color: #d8d8d8;
}
.filter input {
  flex: 1;
  min-width: 0;
}
.clip {
  flex: 1;
  min-height: 130px;
  padding-top: 1px;
  margin: 0 4px;
}
th {
  color: #dadada;
  font-weight: 600;
}
.filetable th {
  height: 12px;
}
.filetable td {
  height: 13px;
}
.sorted {
  display: flex;
  align-items: center;
  justify-content: space-between;
}
.sorted .icon {
  width: 6px;
  height: 6px;
}
.f-name {
  width: 93px;
  padding: 0 7px 0 3px;
}
.f-dur {
  width: 67px;
}
.f-st {
  width: 15px;
}
.f-rate {
  width: 51px;
}
.f-ch {
  width: 41px;
}
.f-bit {
  width: 40px;
}
.fname {
  display: flex;
  align-items: center;
  gap: 5px;
  padding-left: 20px;
}
.indent {
  padding-left: 7px;
}
.sel {
  background: #3e3e3e;
}
.filetable .sel {
  color: #41abd4;
}
.hscroll {
  height: 10px;
  margin: 0 4px;
  display: flex;
  justify-content: flex-end;
}
.hscroll i {
  width: 64%;
  background: #191919;
}
.preview {
  display: flex;
  justify-content: center;
  gap: 8px;
  height: 23px;
  color: #cfcfcf;
}
.preview button {
  width: 12px;
}

/* favourites */
.favbar {
  display: flex;
  align-items: center;
  height: 20px;
  padding: 0 3px;
  color: #c4c4c4;
}
.favbar button {
  width: 18px;
}
.favbar .icon {
  width: 10px;
  height: 10px;
}
.favedit {
  display: flex;
  align-items: center;
  margin-left: auto;
  color: #6a6a6a;
}
.sep {
  width: 1px;
  height: 12px;
  margin: 0 3px;
  background: #1e1e1e;
}
.favlist {
  display: flex;
  height: 72px;
  margin: 0 6px 4px 4px;
  overflow: hidden;
}
.favlist table {
  flex: 1;
  align-self: flex-start;
}
.favlist th {
  height: 12px;
  padding-left: 3px;
  border-right: 1px solid #1e1e1e;
}
.favlist td {
  height: 13px;
  padding-left: 4px;
}
.v-name {
  width: 107px;
}
.v-key {
  width: 68px;
}
.vscroll {
  width: 17px;
  display: flex;
  flex-direction: column;
  align-items: center;
  padding: 10px 0 0 8px;
  background: linear-gradient(#262626 26px, #191919 26px);
}
.vscroll .icon {
  width: 5px;
  height: 5px;
}
.vscroll i {
  width: 4px;
  height: 16px;
  margin-top: 15px;
  background: repeating-linear-gradient(#666 0 2px, #222 2px 4px);
}

/* editor */
.editor {
  display: flex;
  flex-direction: column;
  min-width: 0;
  background: #1b1b1b;
}
.tabs {
  display: flex;
  height: 18px;
}
.tab {
  width: 45px;
  padding-left: 8px;
  text-align: left;
  color: #7c7c7c;
}
.tab.current {
  display: flex;
  align-items: center;
  justify-content: space-between;
  width: 109px;
  height: 19px;
  padding: 0 5px 0 7px;
  border: 1px solid #47818f;
  border-bottom: 0;
  background: #262626;
  color: #e0e0e0;
  font-weight: 600;
  z-index: 1;
}
.tab .icon {
  width: 7px;
  height: 7px;
}
.stage {
  flex: 1;
  display: flex;
  flex-direction: column;
  padding: 4px 0 0 4px;
  border: 1px solid #47818f;
  border-right: 0;
  background: #262626;
  box-shadow: inset 2px 2px 2px #1c353c;
}
.overviewrow,
.rulerrow,
.waverow {
  display: grid;
  grid-template-columns: 1fr 50px;
}
.overviewrow {
  grid-template-columns: 1fr 26px 12px 12px;
  height: 20px;
  margin-bottom: 12px;
}
.overview {
  border: 1px solid #000;
  border-left: 4px solid #6ab0d4;
  border-right: 5px solid #6ab0d4;
  background: #fafcfc;
  outline: 1px solid #000;
  outline-offset: -1px;
}
.overview svg {
  display: block;
  width: 100%;
  height: 18px;
}
.overview path {
  fill: #5a7268;
}
.overview .hair {
  stroke: #74887f;
  vector-effect: non-scaling-stroke;
}
.overview .faint {
  stroke: #cfc8cc;
  stroke-width: 2;
  vector-effect: non-scaling-stroke;
}
.overviewrow button,
.rulerrow button {
  color: #b8b8b8;
}
.overviewrow .icon {
  width: 10px;
  height: 11px;
}
.overviewrow .icon.big {
  width: 12px;
}
.rulerrow {
  height: 16px;
}
.rulerrow button {
  text-align: left;
  padding-left: 7px;
}
.ruler {
  position: relative;
  background: #2a5239;
  color: #adc2b5;
}
.ticks {
  position: absolute;
  inset: 0;
  width: 100%;
  height: 100%;
}
.ticks path {
  stroke: #8fae9b;
  stroke-width: 1;
  vector-effect: non-scaling-stroke;
}
.unit {
  position: absolute;
  left: 4px;
  top: 2px;
  color: #7f9e8b;
}
.labels {
  display: flex;
  padding: 2px 0 0 1.668%;
}
.labels span {
  flex: 0 0 3.393%;
  text-align: center;
}
.playhead {
  position: absolute;
  left: -4px;
  bottom: 0;
  width: 8px;
  height: 9px;
  background: #349bd3;
  clip-path: polygon(0 10%, 100% 10%, 100% 60%, 50% 100%, 0 60%);
}
.waverow {
  flex: 1;
  grid-template-columns: 1fr 30px 20px;
  min-height: 216px;
}
.wave {
  position: relative;
  background: #f4f2fb;
  border-left: 1px solid #b0475a;
}
.plot {
  position: absolute;
  inset: 0;
  width: 100%;
  height: 100%;
}
.plot path {
  vector-effect: non-scaling-stroke;
}
.grid {
  fill: none;
  stroke: #dcdfe0;
}
.body {
  fill: #294838;
}
.transient {
  fill: none;
  stroke: #9aa8a2;
}
.zero {
  stroke: #1e2f26;
  opacity: 0.6;
}
.split {
  stroke: #bcbcc2;
  stroke-width: 2;
}
.fade {
  position: absolute;
  top: 6px;
  color: #a9aeb4;
  opacity: 0.6;
}
.fade.left {
  left: 4px;
}
.fade.right {
  right: 6px;
}
.hud {
  position: absolute;
  left: 45%;
  top: 15px;
  display: flex;
  align-items: center;
  width: 83px;
  height: 18px;
  padding: 0 2px;
  margin-left: 3px;
  border-radius: 2px;
  background: linear-gradient(90deg, #5b5b5b 6px, #2d2c2de8 6px 56px, #5a5558d8 60px);
  color: #a0a0a0;
}
.hud .icon {
  width: 11px;
}
.hud .knob {
  width: 13px;
  height: 13px;
  margin: 0 3px;
}
.hud b {
  color: #41abd4;
  font-weight: 400;
}
.hud .pin {
  width: 9px;
  margin-left: auto;
  color: #d8d8d8;
}
.dots {
  width: 1px;
  height: 8px;
  margin-right: 4px;
  background: repeating-linear-gradient(#aaa 0 1px, transparent 1px 3px);
}
.scales {
  display: flex;
  flex-direction: column;
  background: #202020;
  border-top: 1px solid #161616;
}
.scale {
  position: relative;
  flex: 1;
  color: #a4a4a4;
}
.scale + .scale {
  border-top: 1px solid #161616;
}
.scale span {
  position: absolute;
  left: 6px;
  line-height: 10px;
  transform: translateY(-50%);
}
.dbticks {
  width: 4px;
  height: 100%;
  position: absolute;
}
.dbticks path {
  stroke: #808080;
}
.channels {
  display: flex;
  flex-direction: column;
  justify-content: space-around;
  background: #1c1c1c;
}
.channels button {
  width: 15px;
  height: 12px;
  margin-left: 3px;
  background: #000;
  color: #41abd4;
  text-align: center;
}
.grip {
  display: flex;
  align-items: center;
  height: 7px;
  padding: 0 12px 0 17px;
  background: #17171a;
  border-bottom: 1px solid #0c0c0c;
}
.grip i {
  width: 16px;
  height: 3px;
  margin: 0 auto;
  background: repeating-linear-gradient(90deg, #666 0 2px, #222 2px 3px);
}
.grip .icon {
  width: 5px;
  height: 5px;
  color: #aaa;
}
.transport {
  display: grid;
  grid-template-columns: 34% auto 1fr;
  align-items: center;
  height: 24px;
  padding: 0 2px;
  color: #bcbcbc;
}
.transport output {
  color: #3a98bf;
  font-size: 11px;
  line-height: 14px;
}
.keys {
  display: flex;
}
.zoomkeys {
  justify-content: flex-end;
}
.keys button {
  width: 20px;
}
.keys .red {
  color: #a32236;
}
.keys .dim {
  color: #666;
}

/* selection / view */
.selview {
  height: 60px;
}
.selview table {
  width: 200px;
  margin-left: 7px;
}
.selview th {
  height: 14px;
  color: #b0b0b0;
  font-weight: 400;
}
.selview thead th {
  height: 9px;
  line-height: 9px;
}
.selview thead th:first-child {
  width: 35px;
}
.selview thead th:nth-child(2),
.selview thead th:nth-child(3) {
  width: 46px;
}
.selview button {
  color: #41abd4;
}

/* match volume */
.match {
  border-top: 2px solid #000;
  background: #262626;
}
.mtabs {
  display: flex;
  height: 19px;
  background: #1b1b1b;
}
.mtabs button {
  width: 72px;
  padding-left: 8px;
  text-align: left;
  color: #7c7c7c;
}
.mtabs .current {
  width: 73px;
  padding-left: 7px;
  background: #262626;
  color: #e4e4e4;
  font-weight: 600;
}
.mtabs .icon {
  width: 7px;
  height: 7px;
  margin-left: 3px;
}
.mbar {
  display: flex;
  align-items: center;
  height: 22px;
  padding: 0 3px 1px;
  color: #666;
}
.mbar button {
  width: 16px;
}
.mbar .icon {
  width: 11px;
  height: 11px;
}
.mbar .sep {
  margin: 0 4px;
}
.mbar .lit {
  color: #b4b4b4;
}
.mbar .settings {
  width: 87px;
  height: 14px;
  margin-left: 2px;
  background: #000;
  color: #41abd4;
  font-weight: 600;
}
.mbody {
  margin-left: 4px;
  border-left: 1px solid #1e1e1e;
}
.mbody table {
  border-bottom: 1px solid #1f1f1f;
}
.mbody th {
  height: 12px;
}
.c-name {
  width: 123px;
  padding: 0 7px 0 2px;
}
.c-status {
  width: 27px;
}
.c-stage {
  width: 59px;
}
.c-itu {
  width: 55px;
}
.c-num {
  width: 47px;
}
.c-clip {
  width: 41px;
}
.c-type {
  width: 94px;
}
.c-ename {
  width: 121px;
}
.c-loc {
  width: 147px;
}
.c-fmt {
  width: 145px;
  border-right: 1px solid #1e1e1e;
}
.dropzone {
  display: flex;
  align-items: center;
  justify-content: center;
  height: 86px;
}
.dropzone p {
  padding: 1px 4px 2px;
  border-radius: 3px;
  background: #3c3c3c;
  color: #dcdcdc;
  font-weight: 600;
}
.grip.second {
  margin-left: 4px;
  padding: 0 10px 0 15px;
  background: #1a1a1a;
  border: 0;
}
.params {
  display: flex;
  justify-content: space-between;
  height: 81px;
  padding-left: 8px;
  border-bottom: 1px solid #1f1f1f;
}
.group {
  width: 160px;
  padding: 5px 0 0 7px;
  border-right: 1px solid #212121;
}
.legend,
.line {
  display: flex;
  align-items: center;
  gap: 3px;
  height: 14px;
}
.legend {
  gap: 6px;
  height: 12px;
  margin-bottom: 3px;
  padding-left: 1px;
}
.legend select {
  width: 96px;
}
.hot {
  width: 16px;
  color: #41abd4;
}
.hot.short {
  width: 14px;
}
.hot.wide {
  width: 18px;
}
.sub span {
  width: 70px;
  text-align: right;
}
input[type="checkbox"] {
  appearance: none;
  width: 7px;
  height: 8px;
  background: #1b1b1b;
  position: relative;
}
input[type="checkbox"]:checked::after {
  content: "";
  position: absolute;
  left: 2px;
  top: 0;
  width: 2px;
  height: 5px;
  border: solid currentColor;
  border-width: 0 1px 1px 0;
  transform: rotate(38deg);
}
.line input[type="checkbox"] {
  color: #e8e8e8;
}
.rail {
  width: 11px;
  border-left: 1px solid #1c1c1c;
  background: linear-gradient(#262626 74px, #161616 74px);
}
.actions {
  display: flex;
  align-items: center;
  height: 21px;
  padding-left: 6px;
  color: #808080;
}
.actions label {
  display: flex;
  gap: 2px;
  align-items: center;
}
.actions button {
  height: 14px;
  background: #202020;
}
.actions .exp {
  width: 66px;
  margin-left: 5px;
}
.undo {
  width: 40px;
  margin-left: auto;
}
.run {
  width: 37px;
  margin-left: 4px;
}
.status {
  display: flex;
  align-items: center;
  height: 15px;
  padding: 0 0 0 5px;
  border-top: 1px solid #000;
  background: #262626;
}
.fmt {
  width: 118px;
  margin-left: auto;
}
.size {
  width: 49px;
}
.len {
  width: 37px;
}
.free {
  width: 75px;
}
.taskbar {
  display: flex;
  justify-content: space-between;
  height: 5px;
  padding: 0 12px 0 260px;
  overflow: hidden;
  background: #030407;
  color: #ddd;
}
.taskbar i {
  width: 32px;
  background: #2c2c33;
}
.cursor {
  position: absolute;
  left: 750px;
  top: 514px;
  width: 10px;
  height: 13px;
}
</style>
